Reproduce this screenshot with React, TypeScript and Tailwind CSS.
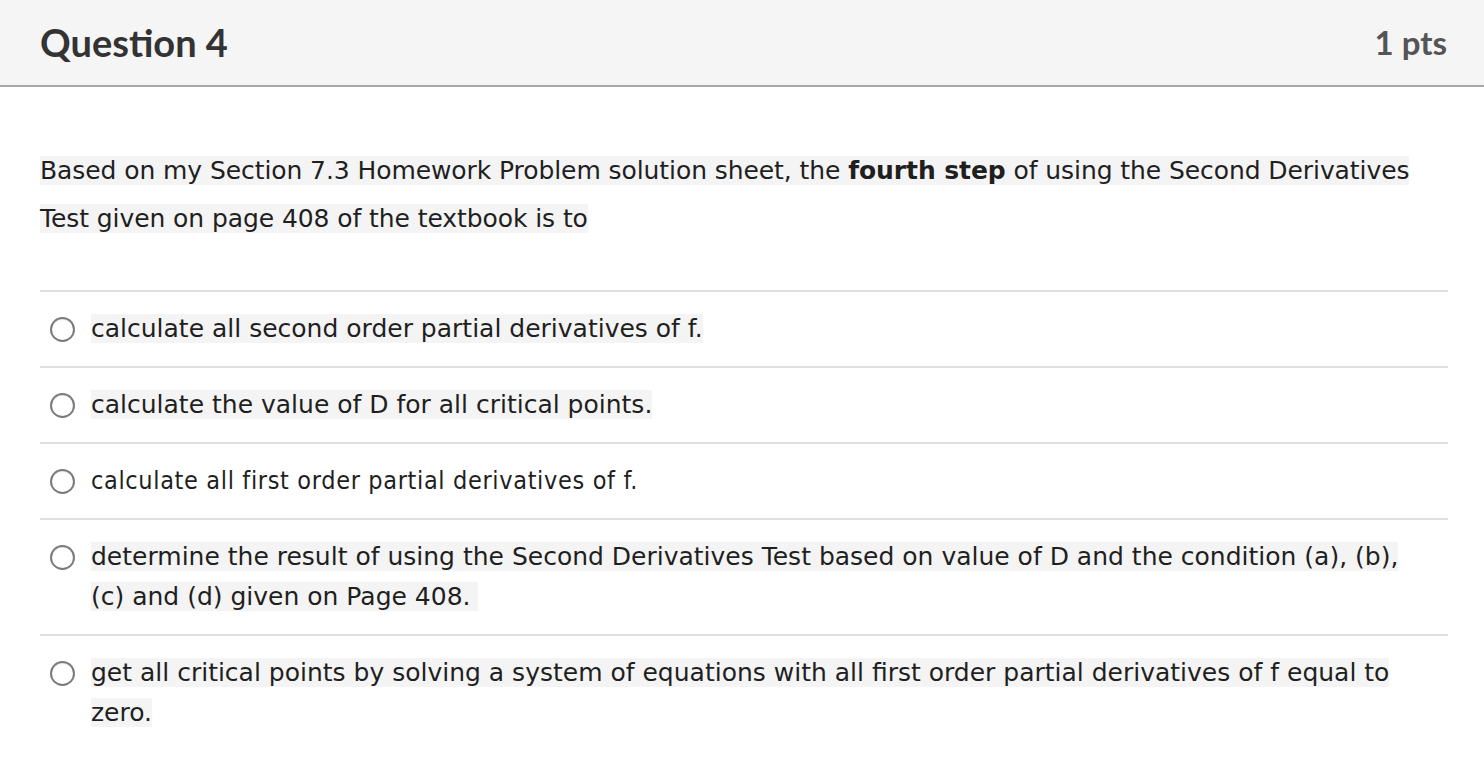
import React from "react"

const options: { text: string; plain?: boolean }[] = [
  { text: "calculate all second order partial derivatives of f." },
  { text: "calculate the value of D for all critical points." },
  { text: "calculate all first order partial derivatives of f.", plain: true },
  {
    text: "determine the result of using the Second Derivatives Test based on value of D and the condition (a), (b), (c) and (d) given on Page 408.\u00a0",
  },
  {
    text: "get all critical points by solving a system of equations with all first order partial derivatives of f equal to zero.",
  },
]

function Radio() {
  return (
    <div className="mt-[8px] h-[25px] w-[25px] shrink-0 rounded-full border-2 border-[#7b7b7b] bg-white shadow-[inset_0_1px_1px_rgba(0,0,0,0.08)]" />
  )
}

export default function App() {
  return (
    <div className="min-h-screen bg-white">
      {/* header */}
      <div className="flex h-[87px] items-center justify-between border-b-2 border-[#a9a9a9] bg-[#f5f5f5] pl-[40px] pr-[37px] font-['Lato',sans-serif] font-bold">
        <h2 className="pb-[1px] text-[38px] leading-none text-[#333333]">Question 4</h2>
        <div className="pb-[1px] text-[33px] leading-none text-[#555555]">1 pts</div>
      </div>

      <div className="pl-[40px] pr-[36px] font-['DejaVu_Sans',sans-serif] text-[#1f1f1f]">
        {/* question text */}
        <p className="mt-[60px] text-[25px] leading-[48px] tracking-[-0.08px]">
          <span className="bg-[#f4f4f4]">
            Based on my Section 7.3 Homework Problem solution sheet, the <b>fourth step</b> of using the Second Derivatives Test given on page 408 of the textbook is to
          </span>
        </p>

        {/* answers */}
        <div className="mt-[47px]">
          {options.map((o, i) => (
            <div key={i} className="flex gap-[16px] border-t-2 border-[#e0e0e0] py-[17px] pl-[10px]">
              <Radio />
              <div className="max-w-[1320px] text-[25px] leading-[40px]">
                {o.plain ? (
                  <span className="font-['DejaVu_Sans_Condensed','DejaVu_Sans',sans-serif] tracking-[0.65px] [font-stretch:condensed]">{o.text}</span>
                ) : (
                  <span className="bg-[#f4f4f4]">{o.text}</span>
                )}
              </div>
            </div>
          ))}
        </div>
      </div>
    </div>
  )
}
